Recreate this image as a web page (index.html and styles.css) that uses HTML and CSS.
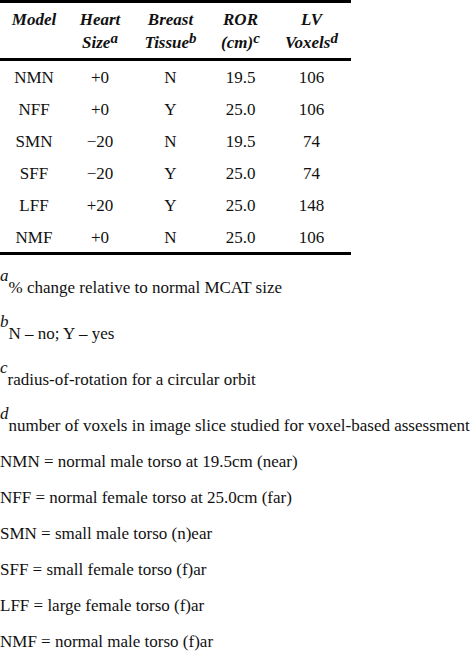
FILE: index.html
```html
<!DOCTYPE html>
<html>
<head>
<meta charset="utf-8">
<link rel="stylesheet" href="styles.css">
</head>
<body>
<table class="data">
  <thead>
    <tr>
      <th>Model</th>
      <th>Heart<br>Size<sup>a</sup></th>
      <th>Breast<br>Tissue<sup>b</sup></th>
      <th>ROR<br>(cm)<sup>c</sup></th>
      <th>LV<br>Voxels<sup>d</sup></th>
    </tr>
  </thead>
  <tbody>
    <tr><td>NMN</td><td>+0</td><td>N</td><td>19.5</td><td>106</td></tr>
    <tr><td>NFF</td><td>+0</td><td>Y</td><td>25.0</td><td>106</td></tr>
    <tr><td>SMN</td><td>−20</td><td>N</td><td>19.5</td><td>74</td></tr>
    <tr><td>SFF</td><td>−20</td><td>Y</td><td>25.0</td><td>74</td></tr>
    <tr><td>LFF</td><td>+20</td><td>Y</td><td>25.0</td><td>148</td></tr>
    <tr><td>NMF</td><td>+0</td><td>N</td><td>25.0</td><td>106</td></tr>
  </tbody>
</table>
<div class="notes">
  <p class="note fn"><sup>a</sup>% change relative to normal MCAT size</p>
  <p class="note fn"><sup>b</sup>N – no; Y – yes</p>
  <p class="note fn"><sup>c</sup>radius-of-rotation for a circular orbit</p>
  <p class="note fn"><sup>d</sup>number of voxels in image slice studied for voxel-based assessment</p>
  <p class="note">NMN = normal male torso at 19.5cm (near)</p>
  <p class="note">NFF = normal female torso at 25.0cm (far)</p>
  <p class="note">SMN = small male torso (n)ear</p>
  <p class="note">SFF = small female torso (f)ar</p>
  <p class="note">LFF = large female torso (f)ar</p>
  <p class="note">NMF = normal male torso (f)ar</p>
</div>
</body>
</html>
```
FILE: styles.css
```css
html, body {
  margin: 0;
  padding: 0;
  background: #fff;
}
body {
  font-family: "Liberation Serif", "Times New Roman", serif;
  font-size: 17px;
  color: #111;
  width: 474px;
  overflow: hidden;
}
.data {
  width: 351px;
  border-collapse: collapse;
  border-top: 3px solid #000;
  border-bottom: 3px solid #000;
}
.data th {
  font-style: italic;
  font-weight: bold;
  line-height: 23px;
  padding: 5px 0 4px;
  text-align: center;
  vertical-align: top;
  border-bottom: 3px solid #000;
}
.data th:nth-child(1) { width: 68px; }
.data th:nth-child(2) { width: 64px; }
.data th:nth-child(3) { width: 77px; }
.data th:nth-child(4) { width: 63px; }
.data th sup {
  font-size: 15px;
  line-height: 0;
  vertical-align: 5px;
}
.data td {
  text-align: center;
  padding: 6px 0;
  line-height: 20px;
}
.data tbody tr:first-child td { padding-top: 7px; }
.data tbody tr:last-child td { padding-bottom: 4px; }
.notes {
  padding-top: 13px;
}
.note {
  margin: 16px 0 0;
  line-height: 20px;
  white-space: nowrap;
}
.note:first-child { margin-top: 0; }
.note.fn { padding-top: 8px; }
.note sup {
  font-style: italic;
  font-size: 17px;
  line-height: 0;
  vertical-align: 12px;
}
```
